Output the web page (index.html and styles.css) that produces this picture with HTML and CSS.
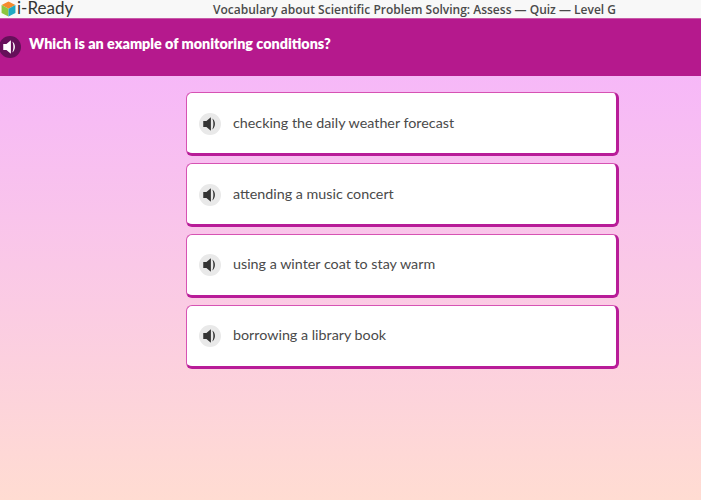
FILE: index.html
```html
<!DOCTYPE html>
<html lang="en">
<head>
<meta charset="utf-8">
<title>Quiz</title>
<link rel="stylesheet" href="styles.css">
</head>
<body>
<header class="topbar">
  <div class="brand">
    <svg class="cube" viewBox="0 0 14 15" width="15" height="16" aria-hidden="true">
      <path d="M7 0.5 13.5 3.8 7 7.2 0.5 3.8Z" fill="#f58a2c"/>
      <path d="M0.5 3.8 7 7.2V14.5L0.5 11.2Z" fill="#8cc63f"/>
      <path d="M13.5 3.8 7 7.2V14.5L13.5 11.2Z" fill="#1fa9c4"/>
    </svg>
    <span class="logo">i-Ready</span>
  </div>
  <div class="lesson">Vocabulary about Scientific Problem Solving: Assess — Quiz — Level G</div>
</header>
<section class="question">
  <span class="audio audio-q">
    <svg viewBox="0 0 20 20" aria-hidden="true"><use href="#spk"/></svg>
  </span>
  <h1>Which is an example of monitoring conditions?</h1>
</section>
<main class="answers">
  <button class="card"><span class="audio"><svg viewBox="0 0 20 20" aria-hidden="true"><use href="#spk"/></svg></span><span class="text">checking the daily weather forecast</span></button>
  <button class="card"><span class="audio"><svg viewBox="0 0 20 20" aria-hidden="true"><use href="#spk"/></svg></span><span class="text">attending a music concert</span></button>
  <button class="card"><span class="audio"><svg viewBox="0 0 20 20" aria-hidden="true"><use href="#spk"/></svg></span><span class="text">using a winter coat to stay warm</span></button>
  <button class="card"><span class="audio"><svg viewBox="0 0 20 20" aria-hidden="true"><use href="#spk"/></svg></span><span class="text">borrowing a library book</span></button>
</main>
<svg class="defs" width="0" height="0" aria-hidden="true">
  <symbol id="spk" viewBox="0 0 20 20">
    <path fill="currentColor" d="M2.5 6.8H6L11 2.5V17.5L6 13.2H2.5Z"/>
    <path fill="currentColor" d="M12.5 4C16.5 6 16.5 14 12.5 16C14.2 13 14.2 7 12.5 4Z"/>
  </symbol>
</svg>
</body>
</html>
```
FILE: styles.css
```css
* { box-sizing: border-box; }
html, body { height: 100%; }
body {
  margin: 0;
  height: 500px;
  overflow: hidden;
  background: linear-gradient(180deg, #f6b8f8 0%, #f6b8f8 15%, #ffdcd2 100%);
  font-family: "Lato", "Liberation Sans", sans-serif;
}
.topbar {
  height: 18px;
  background: #f8f8f8;
  display: flex;
  align-items: center;
  position: relative;
}
.brand { display: flex; align-items: center; gap: 1px; padding-left: 1px; }
.cube { display: block; }
.logo {
  font-family: "Lato", sans-serif;
  font-size: 17px;
  line-height: 16px;
  margin-bottom: 2px;
  color: #333;
}
.lesson {
  position: absolute;
  left: 213px;
  top: 0;
  font-family: "Open Sans", sans-serif;
  font-weight: 600;
  font-size: 12px;
  line-height: 19px;
  color: #4a4a4a;
  white-space: nowrap;
}
.question {
  height: 58px;
  background: #b5198d;
  border-top: 1px solid #c85aa8;
  display: flex;
  align-items: flex-start;
  padding-top: 17px;
  color: #fff;
}
.question h1 {
  margin: -1px 0 0 8px;
  font-size: 14.35px;
  line-height: 18px;
  font-weight: 800;
  color: #fff;
}
.audio {
  flex: none;
  width: 22px;
  height: 22px;
  border-radius: 50%;
  background: #e9e9e9;
  color: #333;
  display: flex;
  align-items: center;
  justify-content: center;
}
.audio-q {
  background: #66105a;
  color: #fff;
  margin-left: -1px;
}
.audio svg { display: block; width: 18px; height: 18px; }
.answers {
  display: flex;
  flex-direction: column;
  gap: 7px;
  width: 434px;
  margin: 16.4px 0 0 186px;
}
.card {
  width: 433px;
  height: 63.8px;
  padding: 1px 0 0 12px;
  display: flex;
  align-items: center;
  gap: 12px;
  background: #fff;
  border: 1px solid #d653b3;
  border-right: 3px solid #b81c98;
  border-bottom: 3px solid #b81c98;
  border-radius: 6px;
  text-align: left;
  font: inherit;
}
.text {
  font-family: "Lato", sans-serif;
  font-size: 14.3px;
  line-height: 18px;
  margin-bottom: 2px;
  color: #4a4a4a;
  white-space: nowrap;
}
.defs { position: absolute; }
```
